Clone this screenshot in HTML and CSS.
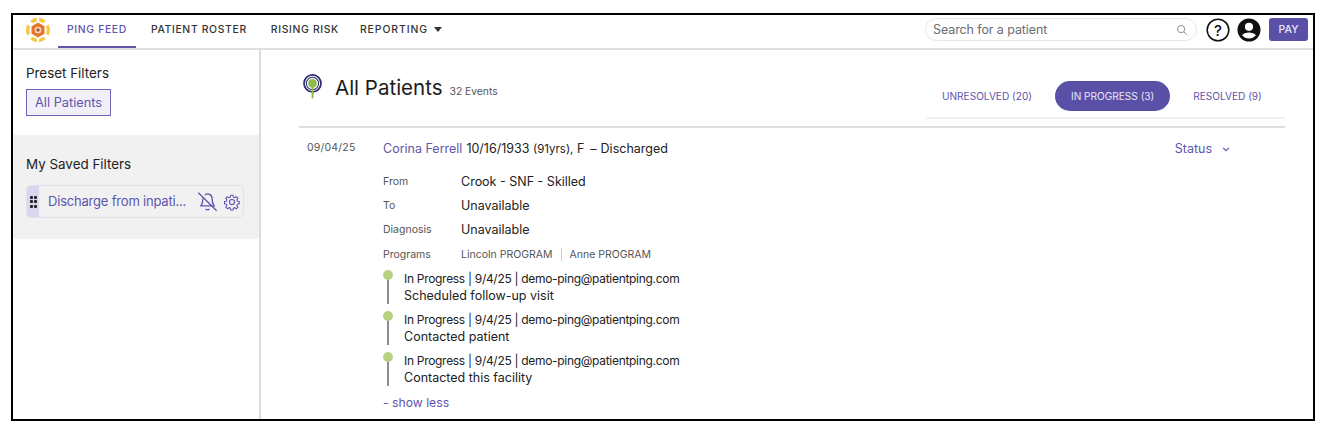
FILE: index.html
```html
<!DOCTYPE html>
<html lang="en">
<head>
<meta charset="utf-8">
<title>Ping Feed</title>
<link rel="stylesheet" href="styles.css">
</head>
<body>
<div class="frame">
  <header class="topbar">
    <svg class="logo" viewBox="0 0 28 28" aria-hidden="true">
      <g fill="#f6c945">
        <path d="M5.500 4.500 Q9 .6 13 .8 L12.500 5 Q10 5.200 8.500 6.800 Z"/>
        <path d="M22.500 4.500 Q19 .6 15 .8 L15.500 5 Q18 5.200 19.500 6.800 Z"/>
        <path d="M2.500 8 Q-.5 14 2.500 20 L5.500 17.800 Q4 14 5.500 10.200 Z"/>
        <path d="M25.500 8 Q28.500 14 25.500 20 L22.500 17.800 Q24 14 22.500 10.200 Z"/>
        <path d="M5.500 23.500 Q9 27.400 13 27.200 L12.500 23 Q10 22.800 8.500 21.200 Z"/>
        <path d="M22.500 23.500 Q19 27.400 15 27.200 L15.500 23 Q18 22.800 19.500 21.200 Z"/>
      </g>
      <path d="M14 6 21 10V18L14 22 7 18V10Z" fill="#e4762b"/>
      <circle cx="14" cy="14" r="3.600" fill="#f7d9bf"/>
      <circle cx="14" cy="14" r="1.800" fill="#a9562f"/>
    </svg>
    <nav class="nav">
      <a class="nav-item active">PING FEED</a>
      <a class="nav-item">PATIENT ROSTER</a>
      <a class="nav-item">RISING RISK</a>
      <a class="nav-item">REPORTING <span class="caret"></span></a>
    </nav>
    <div class="top-right">
      <div class="search">
        <span class="search-text">Search for a patient</span>
        <svg class="search-icon" viewBox="0 0 14 14" aria-hidden="true"><circle cx="6" cy="6" r="4.200"/><path d="M9.200 9.200 12.600 12.600"/></svg>
      </div>
      <svg class="help" viewBox="0 0 24 24" aria-hidden="true"><circle cx="12" cy="12" r="10.800"/><text x="12" y="17.600" text-anchor="middle">?</text></svg>
      <svg class="user" viewBox="0 0 24 24" aria-hidden="true"><path d="M12 .5a11.500 11.500 0 1 0 0 23 11.500 11.500 0 0 0 0-23Zm0 4.200a4.100 4.100 0 1 1 0 8.200 4.100 4.100 0 0 1 0-8.200Zm0 15.900c-2.800 0-5.300-1.300-6.900-3.300 1-1.800 4.200-2.800 6.900-2.800s5.900 1 6.900 2.800c-1.600 2-4.100 3.300-6.900 3.300Z"/></svg>
      <button class="pay">PAY</button>
    </div>
  </header>
  <div class="body">
    <aside class="sidebar">
      <section class="preset">
        <h3 class="side-title">Preset Filters</h3>
        <span class="preset-chip">All Patients</span>
      </section>
      <section class="saved">
        <h3 class="side-title">My Saved Filters</h3>
        <div class="saved-chip">
          <span class="grip"><i></i><i></i><i></i><i></i><i></i><i></i></span>
          <span class="saved-name">Discharge from inpati...</span>
          <svg class="chip-icon bell" viewBox="0 0 24 24" aria-hidden="true"><path d="M9 4.500A5 5 0 0 1 17.200 8.500c0 4 1 6.500 2.300 8.500H7M6.800 8.700c0 3.800-.8 6.300-2.300 8.300H10M10 20.500a2.300 2.300 0 0 0 4 0M1.500 2 22.500 22.500"/></svg>
          <svg class="chip-icon gear" viewBox="0 0 24 24" aria-hidden="true"><path d="M10.300 2.500h3.400l.5 2.700 1.900.8 2.300-1.600 2.400 2.400-1.600 2.300.8 1.900 2.700.5v3.400l-2.700.5-.8 1.900 1.600 2.300-2.400 2.400-2.300-1.600-1.900.8-.5 2.700h-3.400l-.5-2.700-1.900-.8-2.300 1.600-2.400-2.400 1.600-2.300-.8-1.900-2.700-.5v-3.400l2.700-.5.8-1.900-1.600-2.300 2.400-2.400 2.300 1.600 1.900-.8Z" transform="translate(.8 .8) scale(.92)"/><circle cx="12" cy="12" r="3.400"/></svg>
        </div>
      </section>
    </aside>
    <main class="main">
      <div class="heading">
        <div class="title-wrap">
          <svg class="ping" viewBox="0 0 24 28" aria-hidden="true">
            <circle class="ring" cx="12" cy="10.500" r="9.700"/>
            <circle class="ring thin" cx="12" cy="10.500" r="7"/>
            <circle cx="12" cy="10.500" r="5" fill="#8dbb46"/>
            <rect x="11" y="10.500" width="2.200" height="17" fill="#8dbb46"/>
          </svg>
          <h1 class="title">All Patients</h1>
          <span class="count">32 Events</span>
        </div>
        <div class="tabs">
          <a class="tab">UNRESOLVED (20)</a>
          <a class="tab current">IN PROGRESS (3)</a>
          <a class="tab">RESOLVED (9)</a>
        </div>
      </div>
      <article class="event">
        <div class="date">09/04/25</div>
        <div class="detail">
          <div class="patient">
            <a class="link">Corina Ferrell</a>
            <span class="demo">10/16/1933 <span class="age">(91yrs),</span> F</span>
            <span class="dash">–</span>
            <span>Discharged</span>
          </div>
          <dl class="facts">
            <div class="fact"><dt>From</dt><dd>Crook - SNF - Skilled</dd></div>
            <div class="fact"><dt>To</dt><dd>Unavailable</dd></div>
            <div class="fact"><dt>Diagnosis</dt><dd>Unavailable</dd></div>
            <div class="fact programs"><dt>Programs</dt><dd><span class="prog">Lincoln PROGRAM</span><span class="prog">Anne PROGRAM</span></dd></div>
          </dl>
          <ul class="timeline">
            <li class="step"><div class="step-meta">In Progress | 9/4/25 | demo-ping@patientping.com</div><div class="step-text">Scheduled follow-up visit</div></li>
            <li class="step"><div class="step-meta">In Progress | 9/4/25 | demo-ping@patientping.com</div><div class="step-text">Contacted patient</div></li>
            <li class="step"><div class="step-meta">In Progress | 9/4/25 | demo-ping@patientping.com</div><div class="step-text">Contacted this facility</div></li>
          </ul>
          <a class="link more">- show less</a>
        </div>
        <div class="status">Status <svg class="chev" viewBox="0 0 10 6" aria-hidden="true"><path d="M1.500 1 5 4.500 8.500 1"/></svg></div>
      </article>
    </main>
  </div>
</div>
</body>
</html>
```
FILE: styles.css
```css
* { box-sizing: border-box; }
html, body { margin: 0; padding: 0; background: #fff; }
body {
  padding: 13px 13px 13px 11px;
  height: 434px;
  font-family: "Inter", "Liberation Sans", sans-serif;
  color: #222;
  overflow: hidden;
}
.frame {
  height: 408px;
  border: 2px solid #000;
  display: flex;
  flex-direction: column;
  overflow: hidden;
  background: #fff;
}
.topbar {
  flex: none;
  height: 35px;
  display: flex;
  align-items: center;
  border-bottom: 2px solid #dfdfe1;
  padding: 0 5px 4px 12px;
}
.logo { width: 26px; height: 26px; flex: none; }
.nav { display: flex; align-self: stretch; margin-left: 7px; margin-bottom: -4px; }
.nav-item {
  display: flex;
  align-items: center;
  gap: 5px;
  padding: 0 9px 4px;
  margin-right: 6px;
  font-size: 10.400px;
  font-weight: 500;
  letter-spacing: .65px;
  color: #333;
  white-space: nowrap;
}
.nav-item:last-child { margin-left: -3px; letter-spacing: .95px; }
.nav-item.active { color: #5e55ad; box-shadow: inset 0 -2px 0 #5e55ad; height: 33px; }
.caret { width: 0; height: 0; border: 4.500px solid transparent; border-top: 5px solid #333; border-bottom: 0; margin-left: 1px; }
.top-right { margin-left: auto; display: flex; align-items: center; }
.search {
  width: 272px;
  height: 23px;
  border: 1px solid #e6e6e8;
  border-radius: 12px;
  display: flex;
  align-items: center;
  justify-content: space-between;
  padding: 0 8px 0 7px;
  font-size: 12.500px;
  letter-spacing: -.1px;
  color: #6c6c70;
}
.search-icon { width: 12px; height: 12px; fill: none; stroke: #8a8a8e; stroke-width: 1.100; }
.help { width: 24px; height: 24px; margin-left: 9px; fill: none; stroke: #111; stroke-width: 1.500; }
.help text { font: 500 15px "Inter", sans-serif; fill: #111; stroke: none; }
.user { width: 24px; height: 24px; margin-left: 7px; fill: #111; }
.pay {
  width: 39px;
  height: 23px;
  margin-left: 8px;
  border: 0;
  border-radius: 3px;
  background: #5a50a8;
  color: #e9e7f6;
  font: 500 10.500px "Inter", sans-serif;
  padding: 0;
}
.body { flex: 1; display: flex; min-height: 0; }
.sidebar { width: 248px; flex: none; border-right: 2px solid #dcdcde; }
.preset { height: 85px; padding: 15px 13px 0; }
.side-title { margin: 0; font-size: 13.400px; line-height: 17px; font-weight: 400; color: #222; }
.preset-chip {
  display: inline-block;
  margin-top: 7px;
  height: 27px;
  line-height: 25px;
  padding: 0 8px;
  border: 1px solid #6e65b8;
  background: #f1f0f8;
  color: #5e55ad;
  font-size: 12.800px;
}
.saved { height: 104px; background: #f1f1f2; padding: 21px 13px 0; }
.saved-chip {
  margin-top: 12px;
  width: 218px;
  height: 33px;
  border: 1px solid #e3e1f0;
  border-radius: 5px;
  display: flex;
  align-items: center;
  overflow: hidden;
}
.grip {
  width: 12px;
  align-self: stretch;
  background: #d9d6ee;
  display: grid;
  grid-template-columns: 3px 3px;
  gap: 1.500px 1px;
  justify-content: center;
  align-content: center;
  flex: none;
}
.grip i { width: 3px; height: 3px; background: #222; border-radius: 1px; }
.saved-name { margin-left: 9px; font-size: 13px; letter-spacing: -.2px; color: #5e55ad; white-space: nowrap; flex: 1; padding-bottom: 1px; }
.chip-icon { fill: none; stroke: #5e55ad; stroke-width: 1.500; flex: none; }
.bell { width: 21px; height: 21px; margin-right: 5px; }
.gear { width: 18px; height: 18px; margin-right: 2px; }
.main { flex: 1; padding: 0 28px 0 38px; min-width: 0; }
.heading { height: 78px; border-bottom: 2px solid #dfdfe1; display: flex; justify-content: space-between; }
.title-wrap { display: flex; align-items: baseline; padding-top: 25px; }
.ping { width: 21px; height: 25px; align-self: flex-start; margin: -1px 0 0 3px; }
.ring { fill: none; stroke: #2f2c6e; stroke-width: 2; }
.ring.thin { stroke-width: 1.200; }
.title { margin: 0 0 0 12px; font-size: 20.500px; line-height: 26px; font-weight: 400; color: #1c1c1c; }
.count { margin-left: 7px; font-size: 10.300px; color: #555; }
.tabs {
  align-self: flex-start;
  margin-top: 31px;
  width: 359px;
  height: 38px;
  display: flex;
  gap: 7px;
  align-items: flex-start;
  border-bottom: 2px solid #f1f1f2;
}
.tab {
  height: 30px;
  line-height: 30px;
  padding: 0 16px;
  font-size: 10.100px;
  color: #5e55ad;
  white-space: nowrap;
}
.tab.current { background: #5a50a8; color: #e9e7f6; border-radius: 15px; }
.event { display: flex; padding-top: 12px; position: relative; }
.date { width: 84px; padding-left: 8px; font-size: 10.500px; line-height: 15px; color: #555; letter-spacing: .2px; }
.detail { flex: 1; }
.patient { display: flex; gap: 4px; font-size: 12.500px; line-height: 18px; color: #222; }
.link { color: #5e55ad; }
.age { font-size: 11.500px; }
.dash { margin-left: 2px; }
.facts { margin: 11px 0 0; }
.fact { display: flex; height: 24px; align-items: center; }
.fact.programs { height: 25px; padding-top: 1px; }
.fact dt { width: 78px; font-size: 10.500px; color: #555; }
.fact dd { margin: 0; font-size: 12.500px; color: #222; }
.programs dd { display: flex; font-size: 10.500px; color: #555; }
.prog + .prog { margin-left: 8px; padding-left: 8px; border-left: 1px solid #ccc; }
.timeline { list-style: none; margin: 0; padding: 0; }
.step { position: relative; height: 41px; padding: 4px 0 0 21px; font-size: 12.500px; line-height: 17px; color: #222; }
.step::before { content: ""; position: absolute; left: 0; top: 4px; width: 10px; height: 10px; border-radius: 50%; background: #b6d17f; z-index: 1; }
.step::after { content: ""; position: absolute; left: 4px; top: 8px; width: 2px; height: 30px; background: #8d8d90; }
.step-meta { font-size: 12px; letter-spacing: -.3px; }
.more { display: block; margin-top: 5px; font-size: 12.200px; line-height: 18px; }
.status { position: absolute; right: 55px; top: 12px; font-size: 12.500px; line-height: 18px; color: #5e55ad; display: flex; align-items: center; gap: 10px; }
.chev { width: 8px; height: 5px; fill: none; stroke: #5e55ad; stroke-width: 1.500; }
```
